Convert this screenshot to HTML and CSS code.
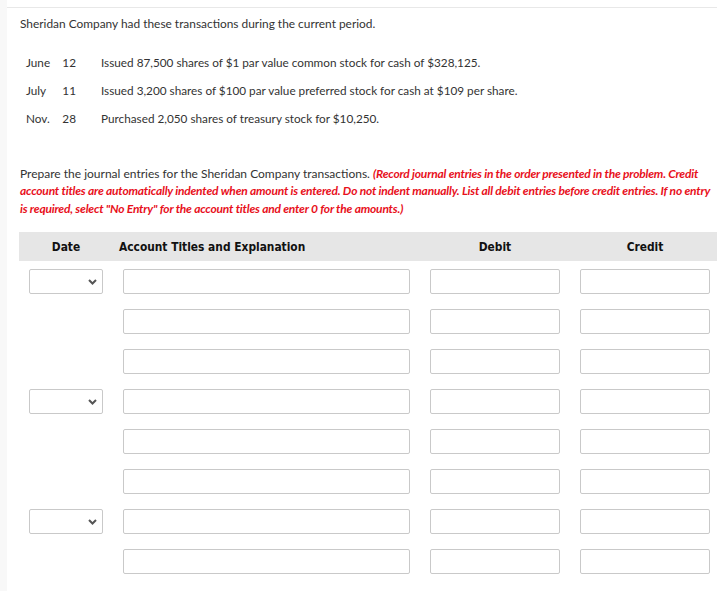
FILE: index.html
```html
<!DOCTYPE html>
<html>
<head>
<meta charset="utf-8">
<link rel="stylesheet" href="styles.css">
</head>
<body>
<div class="page">
  <div class="rail"></div>
  <div class="main">
    <p class="intro">Sheridan Company had these transactions during the current period.</p>
    <div class="tx">
      <div class="tx-row"><span class="mon">June</span><span class="day">12</span><span class="desc">Issued 87,500 shares of $1 par value common stock for cash of $328,125.</span></div>
      <div class="tx-row"><span class="mon">July</span><span class="day">11</span><span class="desc">Issued 3,200 shares of $100 par value preferred stock for cash at $109 per share.</span></div>
      <div class="tx-row"><span class="mon">Nov.</span><span class="day">28</span><span class="desc">Purchased 2,050 shares of treasury stock for $10,250.</span></div>
    </div>
    <p class="instr">Prepare the journal entries for the Sheridan Company transactions. <em class="red">(Record journal entries in the order presented in the problem. Credit account titles are automatically indented when amount is entered. Do not indent manually. List all debit entries before credit entries. If no entry is required, select "No Entry" for the account titles and enter 0 for the amounts.)</em></p>
    <div class="journal">
      <div class="jhead">
        <div class="h-date">Date</div>
        <div class="h-title">Account Titles and Explanation</div>
        <div class="h-amt">Debit</div>
        <div class="h-amt">Credit</div>
      </div>
      <div class="jrow">
        <div class="c-date"><div class="sel"><svg width="9" height="6" viewBox="0 0 9 6"><polyline points="1,1 4.5,4.5 8,1" fill="none" stroke="#555" stroke-width="2"/></svg></div></div>
        <div class="c-title"><div class="inp"></div></div>
        <div class="c-amt"><div class="inp"></div></div>
        <div class="c-amt"><div class="inp"></div></div>
      </div>
      <div class="jrow">
        <div class="c-date"></div>
        <div class="c-title"><div class="inp"></div></div>
        <div class="c-amt"><div class="inp"></div></div>
        <div class="c-amt"><div class="inp"></div></div>
      </div>
      <div class="jrow">
        <div class="c-date"></div>
        <div class="c-title"><div class="inp"></div></div>
        <div class="c-amt"><div class="inp"></div></div>
        <div class="c-amt"><div class="inp"></div></div>
      </div>
      <div class="jrow">
        <div class="c-date"><div class="sel"><svg width="9" height="6" viewBox="0 0 9 6"><polyline points="1,1 4.5,4.5 8,1" fill="none" stroke="#555" stroke-width="2"/></svg></div></div>
        <div class="c-title"><div class="inp"></div></div>
        <div class="c-amt"><div class="inp"></div></div>
        <div class="c-amt"><div class="inp"></div></div>
      </div>
      <div class="jrow">
        <div class="c-date"></div>
        <div class="c-title"><div class="inp"></div></div>
        <div class="c-amt"><div class="inp"></div></div>
        <div class="c-amt"><div class="inp"></div></div>
      </div>
      <div class="jrow">
        <div class="c-date"></div>
        <div class="c-title"><div class="inp"></div></div>
        <div class="c-amt"><div class="inp"></div></div>
        <div class="c-amt"><div class="inp"></div></div>
      </div>
      <div class="jrow">
        <div class="c-date"><div class="sel"><svg width="9" height="6" viewBox="0 0 9 6"><polyline points="1,1 4.5,4.5 8,1" fill="none" stroke="#555" stroke-width="2"/></svg></div></div>
        <div class="c-title"><div class="inp"></div></div>
        <div class="c-amt"><div class="inp"></div></div>
        <div class="c-amt"><div class="inp"></div></div>
      </div>
      <div class="jrow">
        <div class="c-date"></div>
        <div class="c-title"><div class="inp"></div></div>
        <div class="c-amt"><div class="inp"></div></div>
        <div class="c-amt"><div class="inp"></div></div>
      </div>
    </div>
  </div>
</div>
</body>
</html>
```
FILE: styles.css
```css
html, body {
  margin: 0;
  padding: 0;
  background: #fff;
  overflow: hidden;
}
body {
  font-family: Lato, "Open Sans", sans-serif;
  font-size: 12px;
  color: #333;
}
.page {
  display: flex;
  min-height: 591px;
  width: 717px;
  overflow: hidden;
}
.rail {
  width: 7px;
  flex: none;
  background: #f8f8f8;
}
.main {
  flex: 1;
  margin-top: 7px;
  border-top: 1px solid #e8e8e8;
  padding-left: 13px;
  min-width: 0;
}
.intro {
  margin: 8px 0 0;
  line-height: 15px;
  font-size: 11.9px;
}
.tx {
  margin-top: 17px;
  display: flex;
  flex-direction: column;
  font-size: 11.75px;
}
.tx-row {
  display: flex;
  height: 28.3px;
  align-items: center;
  line-height: 15px;
}
.mon {
  width: 31px;
  padding-left: 6px;
}
.day {
  width: 19px;
  text-align: right;
}
.desc {
  margin-left: 25px;
}
.instr {
  margin: 32px 0 0;
  line-height: 17.5px;
  width: 692px;
}
.red {
  color: #e8101b;
  font-weight: bold;
  font-style: italic;
  letter-spacing: -0.2px;
}
.journal {
  margin-top: 15px;
  margin-left: -1px;
  width: 701px;
}
.jhead {
  display: grid;
  grid-template-columns: 94px 307px 150px 150px;
  height: 29px;
  align-items: center;
  background: #e6e6e6;
  font-family: "DejaVu Sans Condensed", "DejaVu Sans", sans-serif;
  font-weight: bold;
  font-size: 11.85px;
  color: #111;
}
.h-date, .h-amt {
  text-align: center;
}
.h-title {
  padding-left: 6px;
}
.jrow {
  display: grid;
  grid-template-columns: 94px 307px 150px 150px;
  height: 40px;
  align-items: start;
}
.c-date {
  padding: 8px 0 0 10px;
}
.c-title, .c-amt {
  padding: 8px 10px 0 10px;
}
.inp, .sel {
  box-sizing: border-box;
  height: 25px;
  border: 1px solid #c9c9c9;
  border-radius: 2px;
  background: #fff;
}
.sel {
  width: 74px;
  display: flex;
  align-items: center;
  justify-content: flex-end;
  padding-right: 5px;
}
```
